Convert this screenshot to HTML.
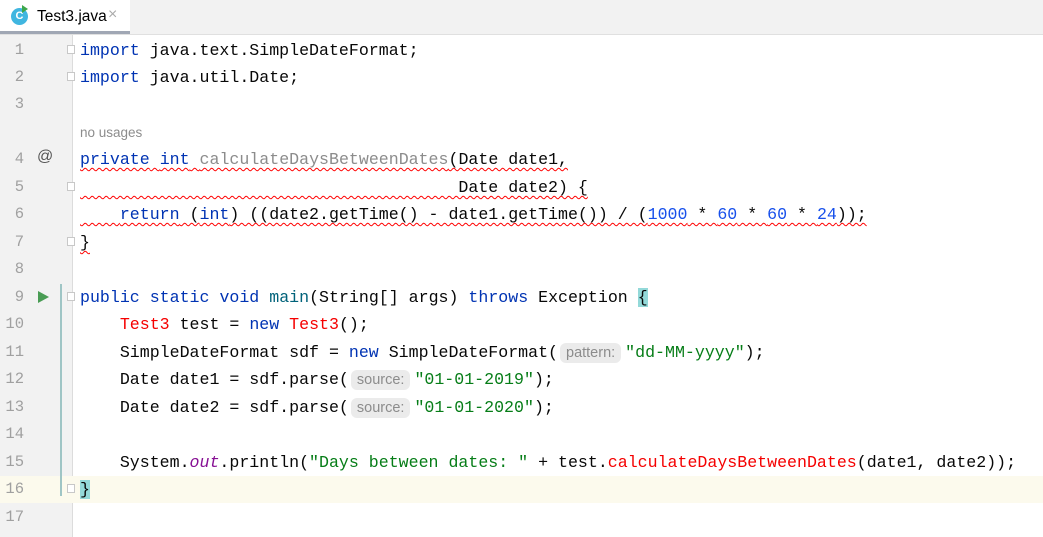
<!DOCTYPE html><html><head><style>
body{margin:0;width:1043px;height:537px;overflow:hidden;background:#fff;font-family:"Liberation Mono",monospace;}
#tabs{position:absolute;left:0;top:0;width:1043px;height:34px;background:#f2f2f2;border-bottom:1px solid #e0e0e0;}
#tab{position:absolute;left:0;top:0;width:130px;height:31px;background:#fff;border-bottom:3px solid #a0a7b4;font-family:"Liberation Sans",sans-serif;font-size:15.5px;}
#gut{position:absolute;left:0;top:35px;width:72px;height:502px;background:#f2f2f2;border-right:1px solid #dcdcdc;}
.ln{position:absolute;left:0;width:24px;text-align:right;font-size:15.5px;color:#a0a0a0;}
.cl{position:absolute;left:80px;white-space:pre;font-size:16.6px;color:#080808;height:27px;line-height:27px;}
.k{color:#0033b3}.s{color:#067d17}.n{color:#1750eb}.r{color:#f50000}.g{color:#8c8c8c}.p{color:#871094;font-style:italic}
.w{text-decoration:underline wavy #f00;text-decoration-thickness:1px;text-underline-offset:3px}
.h{font-family:"Liberation Sans",sans-serif;font-size:14.5px;color:#8c8c8c;background:#ebebeb;border-radius:6px;padding:2px 6px;margin:0 4px 0 2px;}
.fold{position:absolute;left:67px;width:8px;height:9px;border:1px solid #c8c8c8;background:#fff;box-sizing:border-box}
</style></head><body>
<div id="tabs"><div id="tab">
<div style="position:absolute;left:11px;top:8px;width:17px;height:17px;border-radius:50%;background:#40b6e0;color:#fff;font-size:11px;text-align:center;line-height:17px;font-weight:bold">C</div>
<div style="position:absolute;left:22px;top:5px;width:0;height:0;border-left:6px solid #3ea74a;border-top:4px solid transparent;border-bottom:4px solid transparent"></div>
<span style="position:absolute;left:37px;top:8px;color:#000">Test3.java</span>
<span style="position:absolute;left:108px;top:6px;color:#aaa;font-size:16px">×</span></div></div>
<div id="gut"></div>
<div style="position:absolute;left:0;top:476px;width:1043px;height:27px;background:#fcfaed"></div>
<div style="position:absolute;left:60px;top:284px;width:2px;height:212px;background:#9fc5c5"></div>
<div class="ln" style="top:41px">1</div><div class="ln" style="top:68px">2</div><div class="ln" style="top:95px">3</div>
<div class="ln" style="top:150px">4</div><div class="ln" style="top:178px">5</div><div class="ln" style="top:205px">6</div>
<div class="ln" style="top:233px">7</div><div class="ln" style="top:260px">8</div><div class="ln" style="top:288px">9</div>
<div class="ln" style="top:315px">10</div><div class="ln" style="top:343px">11</div><div class="ln" style="top:370px">12</div>
<div class="ln" style="top:398px">13</div><div class="ln" style="top:425px">14</div><div class="ln" style="top:453px">15</div>
<div class="ln" style="top:480px">16</div><div class="ln" style="top:508px">17</div>
<div style="position:absolute;left:37px;top:148px;font-family:'Liberation Sans',sans-serif;font-size:16px;color:#555">@</div>
<div style="position:absolute;left:38px;top:291px;width:0;height:0;border-left:11px solid #499c54;border-top:6px solid transparent;border-bottom:6px solid transparent"></div>
<div class="fold" style="top:45px"></div><div class="fold" style="top:72px"></div><div class="fold" style="top:182px"></div>
<div class="fold" style="top:237px"></div><div class="fold" style="top:292px"></div><div class="fold" style="top:484px"></div>
<div class="cl" style="top:37px"><span class="k">import</span> java.text.SimpleDateFormat;</div>
<div class="cl" style="top:64px"><span class="k">import</span> java.util.Date;</div>
<div class="cl" style="top:119px;font-family:'Liberation Sans',sans-serif;font-size:13.5px;color:#8c8c8c">no usages</div>
<div class="cl" style="top:146px"><span class="w"><span class="k">private</span> <span class="k">int</span> <span class="g">calculateDaysBetweenDates</span>(Date date1,</span></div>
<div class="cl" style="top:174px"><span class="w">                                      Date date2) {</span></div>
<div class="cl" style="top:201px"><span class="w">    <span class="k">return</span> (<span class="k">int</span>) ((date2.getTime() - date1.getTime()) / (<span class="n">1000</span> * <span class="n">60</span> * <span class="n">60</span> * <span class="n">24</span>));</span></div>
<div class="cl" style="top:229px"><span class="w">}</span></div>
<div class="cl" style="top:284px"><span class="k">public</span> <span class="k">static</span> <span class="k">void</span> <span style="color:#00627a">main</span>(String[] args) <span class="k">throws</span> Exception <span style="background:#93d9d9">{</span></div>
<div class="cl" style="top:311px">    <span class="r">Test3</span> test = <span class="k">new</span> <span class="r">Test3</span>();</div>
<div class="cl" style="top:339px">    SimpleDateFormat sdf = <span class="k">new</span> SimpleDateFormat(<span class="h">pattern:</span><span class="s">"dd-MM-yyyy"</span>);</div>
<div class="cl" style="top:366px">    Date date1 = sdf.parse(<span class="h">source:</span><span class="s">"01-01-2019"</span>);</div>
<div class="cl" style="top:394px">    Date date2 = sdf.parse(<span class="h">source:</span><span class="s">"01-01-2020"</span>);</div>
<div class="cl" style="top:449px">    System.<span class="p">out</span>.println(<span class="s">"Days between dates: "</span> + test.<span class="r">calculateDaysBetweenDates</span>(date1, date2));</div>
<div class="cl" style="top:476px"><span style="background:#93d9d9">}</span></div>
</body></html>
